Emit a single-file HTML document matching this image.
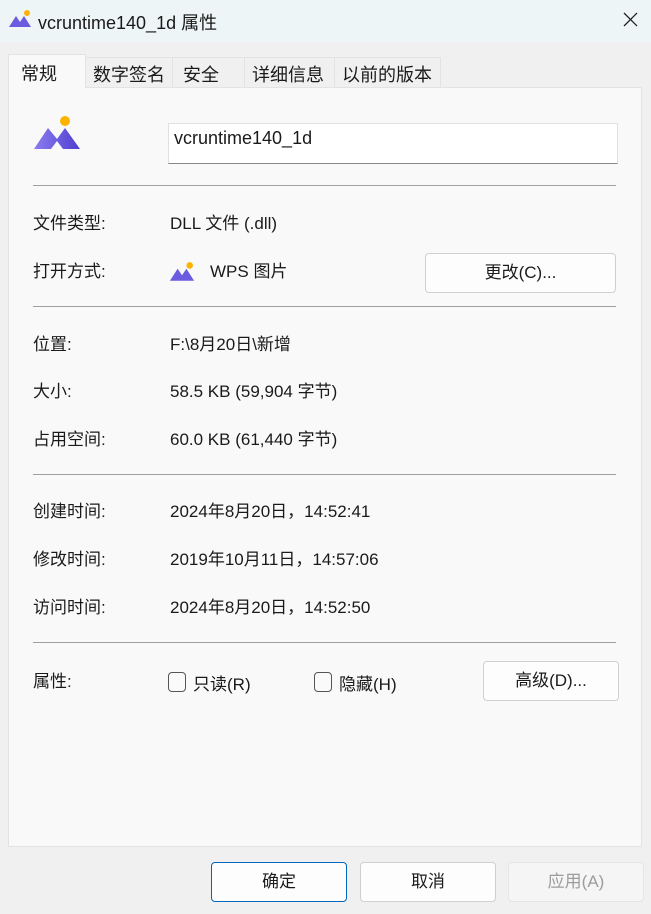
<html><head><style>
body{margin:0;width:651px;height:914px;background:#f0f0f0;position:relative;overflow:hidden;font-family:"Liberation Sans","Noto Sans CJK SC",sans-serif;font-size:17px;color:#1a1a1a}
.a{position:absolute;white-space:nowrap}
.sep{position:absolute;left:33px;width:583px;height:1px;background:#a0a0a0}
.btn{position:absolute;background:#fdfdfd;border:1px solid #d0d0d0;border-radius:4px;text-align:center;box-sizing:border-box}
.tab{position:absolute;top:57px;height:30px;background:#f0f0f0;border:1px solid #e3e3e3;border-bottom:none;box-sizing:border-box;padding-left:7px;line-height:34px}
.cb{position:absolute;width:16px;height:18px;border:1px solid #555;border-radius:4px;background:#fafafa}
</style></head><body>
<div class="a" style="left:0;top:0;width:651px;height:42px;background:#eef5f7"></div>
<svg class="a" style="left:8px;top:9px" width="24" height="20" viewBox="0 0 24 20"><circle cx="19" cy="4" r="3" fill="#fdb300"/><path d="M1 18 L8 7 L12 13 L16 7 L23 18 Z" fill="#6a5be0"/></svg>
<div class="a" style="left:38px;top:9px;font-size:18px">vcruntime140_1d 属性</div>
<svg class="a" style="left:623px;top:12px" width="15" height="15" viewBox="0 0 15 15"><path d="M1 1L14 14M14 1L1 14" stroke="#222" stroke-width="1.3"/></svg>
<div class="a" style="left:8px;top:87px;width:634px;height:760px;background:#f9f9f9;border:1px solid #e3e3e3;box-sizing:border-box"></div>
<div class="tab" style="left:8px;top:54px;width:78px;height:34px;background:#f9f9f9;z-index:2;font-size:18px;line-height:38px;padding-left:12px">常规</div>
<div class="tab" style="left:85px;width:88px;font-size:18px">数字签名</div>
<div class="tab" style="left:172px;width:73px;font-size:18px;padding-left:10px">安全</div>
<div class="tab" style="left:244px;width:91px;font-size:18px">详细信息</div>
<div class="tab" style="left:334px;width:107px;font-size:18px">以前的版本</div>
<svg class="a" style="left:33px;top:115px" width="48" height="36" viewBox="0 0 48 36"><defs><linearGradient id="g" x1="0" x2="1"><stop offset="0" stop-color="#8b7cf0"/><stop offset="1" stop-color="#4f3fd0"/></linearGradient></defs><circle cx="32" cy="6" r="5" fill="#fdb300"/><path d="M1 34 L15 13 L24 24 L32 13 L47 34 L30 34 L24 26 L18 34 Z" fill="url(#g)"/></svg>
<div class="a" style="left:168px;top:123px;width:450px;height:41px;background:#fff;border:1px solid #e0e0e0;border-bottom:1px solid #888;box-sizing:border-box;padding:4px 0 0 5px;font-size:18px">vcruntime140_1d</div>
<div class="sep" style="top:185px"></div>
<div class="a" style="left:33px;top:209px">文件类型:</div><div class="a" style="left:170px;top:209px">DLL 文件 (.dll)</div>
<div class="a" style="left:33px;top:257px">打开方式:</div>
<svg class="a" style="left:168px;top:261px" width="28" height="22" viewBox="0 0 24 20"><circle cx="19" cy="4" r="3" fill="#fdb300"/><path d="M1 18 L8 7 L12 13 L16 7 L23 18 Z" fill="#6a5be0"/></svg>
<div class="a" style="left:210px;top:257px">WPS 图片</div>
<div class="btn" style="left:425px;top:253px;width:191px;height:40px;line-height:38px">更改(C)...</div>
<div class="sep" style="top:306px"></div>
<div class="a" style="left:33px;top:330px">位置:</div><div class="a" style="left:170px;top:330px">F:\8月20日\新增</div>
<div class="a" style="left:33px;top:377px">大小:</div><div class="a" style="left:170px;top:377px">58.5 KB (59,904 字节)</div>
<div class="a" style="left:33px;top:425px">占用空间:</div><div class="a" style="left:170px;top:425px">60.0 KB (61,440 字节)</div>
<div class="sep" style="top:474px"></div>
<div class="a" style="left:33px;top:497px">创建时间:</div><div class="a" style="left:170px;top:497px">2024年8月20日，14:52:41</div>
<div class="a" style="left:33px;top:545px">修改时间:</div><div class="a" style="left:170px;top:545px">2019年10月11日，14:57:06</div>
<div class="a" style="left:33px;top:593px">访问时间:</div><div class="a" style="left:170px;top:593px">2024年8月20日，14:52:50</div>
<div class="sep" style="top:642px"></div>
<div class="a" style="left:33px;top:667px">属性:</div>
<div class="cb" style="left:168px;top:672px"></div><div class="a" style="left:193px;top:670px">只读(R)</div>
<div class="cb" style="left:314px;top:672px"></div><div class="a" style="left:339px;top:670px">隐藏(H)</div>
<div class="btn" style="left:483px;top:661px;width:136px;height:40px;line-height:38px">高级(D)...</div>
<div class="btn" style="left:211px;top:862px;width:136px;height:40px;line-height:38px;border-color:#0067c0">确定</div>
<div class="btn" style="left:360px;top:862px;width:136px;height:40px;line-height:38px">取消</div>
<div class="btn" style="left:508px;top:862px;width:136px;height:40px;line-height:38px;color:#9c9c9c;background:#f5f5f5;border-color:#e5e5e5">应用(A)</div>
</body></html>
